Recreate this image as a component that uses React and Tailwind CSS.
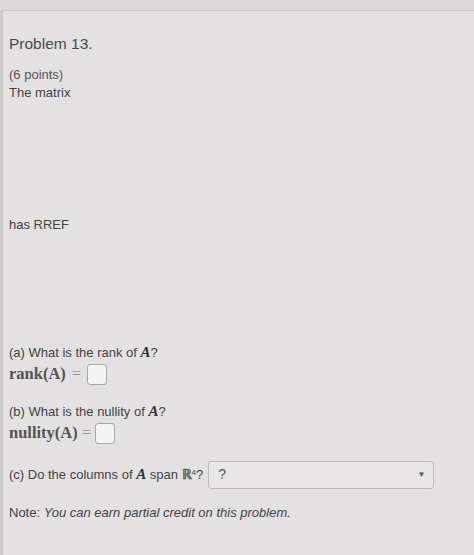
const serif = { fontFamily: '"Liberation Serif", "DejaVu Serif", serif' };

const AnswerBox = () => (
  <span className="inline-block h-[21px] w-[20px] rounded-[3px] border border-[#a9a9a9] bg-[#f4f4f4] align-middle" />
);

const MathA = () => (
  <span className="text-[15px] font-bold italic text-[#333]" style={serif}>A</span>
);

export default function App() {
  return (
    <div
      className="relative h-[555px] w-[474px] overflow-hidden bg-[#e3e1e1] text-[#3c3c3c]"
      style={{ fontFamily: '"Liberation Sans", Arial, sans-serif' }}
    >
      <div className="h-[11px] border-b border-[#cfcccc] bg-[#dcd9d9]" />
      <div className="flex h-[544px]">
        <div className="w-[3px] bg-[#cdcaca]" />
        <div className="flex-1 pl-[6px] pr-[10px]">
          <h1 className="mt-[24px] text-[15.5px] leading-[18px] text-[#4a4a4a]">Problem 13.</h1>

          <p className="mt-[13px] text-[13px] leading-[18px] text-[#555]">(6 points)</p>
          <p className="text-[13px] leading-[18px] text-[#444]">The matrix</p>

          <div className="h-[114px]" />

          <p className="text-[13px] leading-[18px] text-[#444]">has RREF</p>

          <div className="h-[109px]" />

          <p className="text-[13px] leading-[18px] text-[#444]">
            (a) What is the rank of <MathA />?
          </p>
          <div className="flex items-center gap-[6px] text-[16.5px] text-[#555]" style={serif}>
            <span className="font-semibold">rank(A)</span>
            <span className="text-[#9a9a9a]">=</span>
            <AnswerBox />
          </div>

          <p className="mt-[15px] text-[13px] leading-[18px] text-[#444]">
            (b) What is the nullity of <MathA />?
          </p>
          <div className="flex items-center gap-[4px] text-[16.5px] text-[#555]" style={serif}>
            <span className="font-semibold">nullity(A)</span>
            <span className="text-[#9a9a9a]">=</span>
            <AnswerBox />
          </div>

          <div className="mt-[15px] flex items-center text-[13px] text-[#444]">
            <span>
              (c) Do the columns of <MathA /> span{' '}
              <span className="text-[14px] font-bold text-[#666]" style={serif}>ℝ</span>
              <sup className="text-[8px]">4</sup>?
            </span>
            <div className="ml-[5px] flex h-[28px] w-[226px] items-center justify-between rounded-[3px] border border-[#bdbaba] bg-[#e8e6e6] pl-[9px] pr-[8px]">
              <span className="text-[14px] text-[#555]">?</span>
              <span className="text-[8px] text-[#555]">▼</span>
            </div>
          </div>

          <p className="mt-[15px] text-[13px] leading-[18px] text-[#444]">
            <span>Note</span>: <span className="italic">You can earn partial credit on this problem.</span>
          </p>
        </div>
      </div>
    </div>
  );
}
